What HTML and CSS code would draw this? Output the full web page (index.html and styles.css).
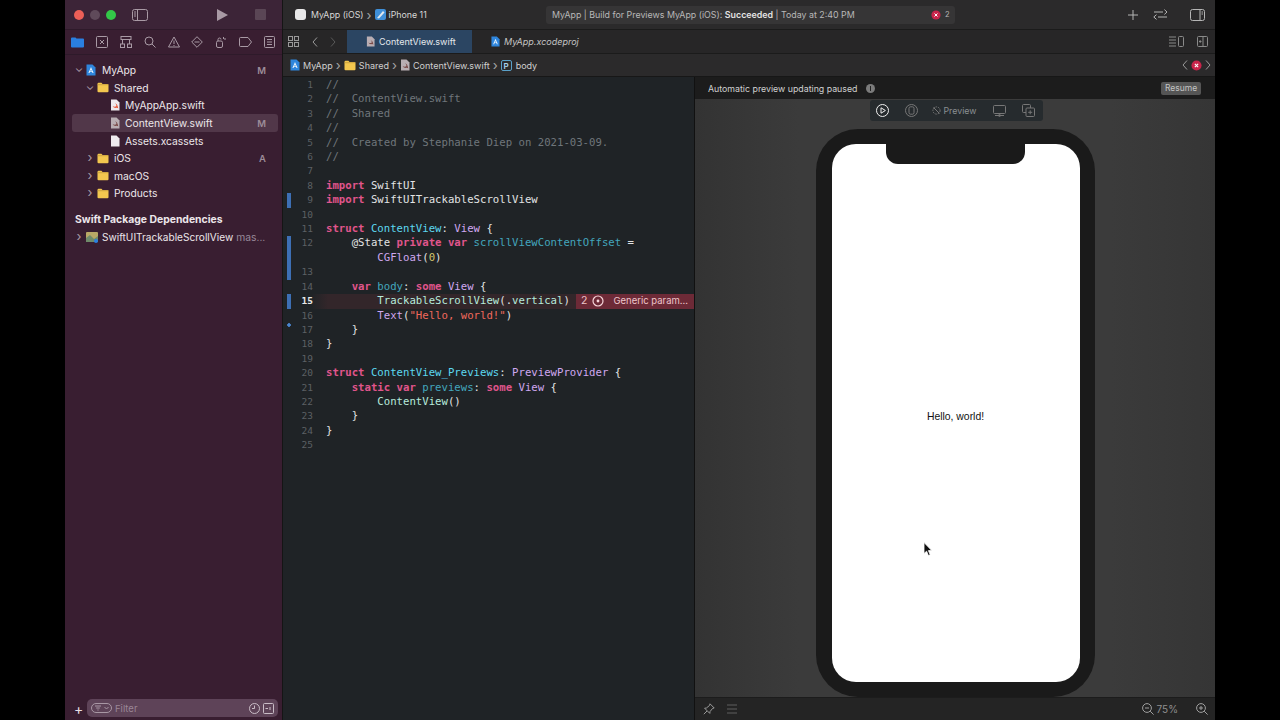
FILE: index.html

```html
<!DOCTYPE html>
<html lang="en">
<head>
  <meta charset="UTF-8">
  <title>MyApp - ContentView.swift</title>
  <link rel="stylesheet" href="styles.css">
</head>
<body>
  <!-- shared icons -->
  <svg class="defs" width="0" height="0">
    <symbol id="i-folder" viewBox="0 0 12 11">
      <path d="M0.5 2 Q0.5 0.8 1.6 0.8 H4.4 L5.6 2 H10.4 Q11.5 2 11.5 3 V9.2 Q11.5 10.2 10.4 10.2 H1.6 Q0.5 10.2 0.5 9.2 Z" fill="#f3c74f"/>
      <path d="M0.5 2.7 H11.5" stroke="#b8923a" stroke-width=".7"/>
    </symbol>
    <symbol id="i-swift" viewBox="0 0 10 12">
      <path d="M1 .5 H6.5 L9.5 3.5 V11.5 H1 Z" fill="#efeaee"/>
      <path d="M2.6 7 Q5 8.5 6.4 7 Q6.6 5.5 5 4 Q7.6 5.4 7.8 7.6 L8.2 9.2 Q6.8 8.4 5.6 9 Q3.6 9 2.6 7 Z" fill="#e8593a"/>
    </symbol>
    <symbol id="i-swift-dim" viewBox="0 0 10 12">
      <path d="M1 .5 H6.5 L9.5 3.5 V11.5 H1 Z" fill="#b9aeb3"/>
      <path d="M2.6 7 Q5 8.5 6.4 7 Q6.6 5.5 5 4 Q7.6 5.4 7.8 7.6 L8.2 9.2 Q6.8 8.4 5.6 9 Q3.6 9 2.6 7 Z" fill="#7a4a48"/>
    </symbol>
    <symbol id="i-proj" viewBox="0 0 10 12">
      <path d="M.5 .5 H6.5 L9.5 3.5 V11.5 H.5 Z" fill="#2f86dd"/>
      <path d="M5 3 L7.6 9 H6.5 L5 5.4 L3.5 9 H2.4 Z M3 7 H7 V7.8 H3 Z" fill="#e8f2fb"/>
    </symbol>
    <symbol id="i-err" viewBox="0 0 12 12">
      <circle cx="6" cy="6" r="5.5" fill="#c9244a"/>
      <path d="M4.2 4.2 L7.8 7.8 M7.8 4.2 L4.2 7.8" stroke="#fff" stroke-width="1.2"/>
    </symbol>
  </svg>

  <div class="app">
    <!-- Navigator -->
    <aside class="sidebar">
      <div class="side-toolbar">
        <div class="lights"><i class="light red"></i><i class="light grey"></i><i class="light green"></i></div>
        <svg class="ico side-toggle" width="16" height="12" viewBox="0 0 16 12" fill="none" stroke="#a99aa5"><rect x=".5" y=".5" width="15" height="11" rx="2"/><path d="M5.5 .5 V11.5 M2 3 H4 M2 5 H4 M2 7 H4"/></svg>
        <svg class="ico play" width="13" height="14" viewBox="0 0 13 14"><path d="M1 1 L12 7 L1 13 Z" fill="#a99aa5"/></svg>
        <svg class="ico stop" width="11" height="11" viewBox="0 0 11 11"><rect width="11" height="11" rx="1" fill="#5a4655"/></svg>
      </div>
      <div class="nav-tabs">
        <svg width="13" height="11" viewBox="0 0 13 11"><path d="M0 1.5 Q0 .5 1 .5 H4.5 L5.5 1.5 H12 Q13 1.5 13 2.5 V9.5 Q13 10.5 12 10.5 H1 Q0 10.5 0 9.5 Z" fill="#2a7fe0"/></svg>
        <svg width="12" height="12" viewBox="0 0 12 12" fill="none" stroke="#a99aa5"><rect x=".5" y=".5" width="11" height="11" rx="1"/><path d="M4 4 L8 8 M8 4 L4 8"/></svg>
        <svg width="12" height="12" viewBox="0 0 12 12" fill="none" stroke="#a99aa5"><rect x="1" y=".5" width="10" height="3"/><path d="M2.5 3.5 V8 M9.5 3.5 V8"/><rect x=".5" y="8" width="4" height="3.5"/><rect x="7.5" y="8" width="4" height="3.5"/></svg>
        <svg width="12" height="12" viewBox="0 0 12 12" fill="none" stroke="#a99aa5"><circle cx="5" cy="5" r="4"/><path d="M8 8 L11.5 11.5"/></svg>
        <svg width="12" height="12" viewBox="0 0 12 12" fill="none" stroke="#a99aa5"><path d="M6 1 L11.5 11 H.5 Z"/><path d="M6 4.5 V8 M6 9 V10"/></svg>
        <svg width="12" height="12" viewBox="0 0 12 12" fill="none" stroke="#a99aa5"><path d="M6 .7 L11.3 6 L6 11.3 L.7 6 Z"/><path d="M3.5 6 H8.5"/></svg>
        <svg width="12" height="12" viewBox="0 0 12 12" fill="none" stroke="#a99aa5"><rect x="1.5" y="5" width="6" height="6.5" rx="1.5"/><path d="M3 5 V3.5 A1.5 1.5 0 0 1 6 3.5 M8.5 1 V3 M10 2 V4"/></svg>
        <svg width="13" height="10" viewBox="0 0 13 10" fill="none" stroke="#a99aa5"><path d="M1.5 .5 H9 L12.5 5 L9 9.5 H1.5 Q.5 9.5 .5 8.5 V1.5 Q.5 .5 1.5 .5 Z"/></svg>
        <svg width="11" height="12" viewBox="0 0 11 12" fill="none" stroke="#a99aa5"><rect x=".5" y=".5" width="10" height="11" rx="1"/><path d="M3 3.5 H8 M3 6 H8 M3 8.5 H8"/></svg>
      </div>

      <div class="tree">
        <div class="row lvl0"><span class="arrow">&#x2304;</span><svg class="file" width="10" height="12"><use href="#i-proj"/></svg><span class="name">MyApp</span><span class="flag">M</span></div>
        <div class="row lvl1"><span class="arrow">&#x2304;</span><svg class="file" width="12" height="11"><use href="#i-folder"/></svg><span class="name">Shared</span></div>
        <div class="row lvl2"><svg class="file" width="10" height="12"><use href="#i-swift"/></svg><span class="name">MyAppApp.swift</span></div>
        <div class="row lvl2 selected"><svg class="file" width="10" height="12"><use href="#i-swift-dim"/></svg><span class="name">ContentView.swift</span><span class="flag">M</span></div>
        <div class="row lvl2"><svg class="file" width="10" height="12" viewBox="0 0 10 12"><path d="M1 .5 H6.5 L9.5 3.5 V11.5 H1 Z" fill="#efeaee"/></svg><span class="name">Assets.xcassets</span></div>
        <div class="row lvl1"><span class="arrow closed">&#x203A;</span><svg class="file" width="12" height="11"><use href="#i-folder"/></svg><span class="name">iOS</span><span class="flag">A</span></div>
        <div class="row lvl1"><span class="arrow closed">&#x203A;</span><svg class="file" width="12" height="11"><use href="#i-folder"/></svg><span class="name">macOS</span></div>
        <div class="row lvl1"><span class="arrow closed">&#x203A;</span><svg class="file" width="12" height="11"><use href="#i-folder"/></svg><span class="name">Products</span></div>
        <div class="group-title">Swift Package Dependencies</div>
        <div class="row lvl0"><span class="arrow closed">&#x203A;</span><svg class="file" width="12" height="12" viewBox="0 0 12 12"><rect y="1" width="12" height="10" rx="1" fill="#b9a866"/><path d="M0 7 L4 4 L8 8 L12 5 V11 H0 Z" fill="#6f8a6a"/><circle cx="10" cy="10" r="2" fill="#2a7fe0"/></svg><span class="name pkg">SwiftUITrackableScrollView</span><span class="pkg-branch">mas...</span></div>
      </div>

      <div class="filter-bar">
        <span class="add">+</span>
        <div class="filter">
          <svg width="21" height="10" viewBox="0 0 21 10" fill="none" stroke="#a897a4"><rect x=".5" y=".5" width="20" height="9" rx="4.5"/><path d="M4 3 H10 M5.2 5 H8.8 M6.4 7 H7.6 M13.5 4 L15.5 6 L17.5 4"/></svg>
          <span class="filter-text">Filter</span>
          <svg class="filter-clock" width="11" height="11" viewBox="0 0 11 11" fill="none" stroke="#c9bcc6"><circle cx="5.5" cy="5.5" r="5"/><path d="M5.5 2.5 V5.5 H3"/></svg>
          <svg width="11" height="11" viewBox="0 0 11 11" fill="none" stroke="#c9bcc6"><rect x=".5" y=".5" width="10" height="10" rx="1"/><path d="M2.5 5.5 H5 M7 4 V7"/></svg>
        </div>
      </div>
    </aside>

    <main class="main">
      <header class="toolbar">
        <div class="scheme">
          <span class="scheme-icon"></span><span>MyApp (iOS)</span><span class="sep">&#x203A;</span>
          <svg width="11" height="11" viewBox="0 0 11 11"><rect width="11" height="11" rx="2" fill="#3f8fd8"/><path d="M2 9 L8 2 L9.5 3.5 L4 9.5 Z" fill="#dfe8ef"/></svg>
          <span>iPhone 11</span>
        </div>
        <div class="status">
          <div class="status-text"><span>MyApp | Build for Previews MyApp (iOS):</span> <b>Succeeded</b> <span>| Today at 2:40 PM</span></div>
          <svg width="10" height="10"><use href="#i-err"/></svg><span class="status-count">2</span>
        </div>
        <div class="toolbar-right">
          <svg width="10" height="10" viewBox="0 0 10 10" stroke="#b5b5b5"><path d="M5 0 V10 M0 5 H10"/></svg>
          <svg width="15" height="11" viewBox="0 0 15 11" fill="none" stroke="#b5b5b5"><path d="M5 8 H14 M0.8 8 L3.5 5.6 M0.8 8 L3.5 10.4 M1 3 H10 M14 3 L11.4 .6 M14 3 L11.4 5.4"/></svg>
          <svg width="15" height="12" viewBox="0 0 15 12" fill="none" stroke="#b5b5b5"><rect x=".5" y=".5" width="14" height="11" rx="2"/><path d="M10 .5 V11.5 M11.5 3 H13 M11.5 5 H13"/></svg>
        </div>
      </header>

      <div class="tabbar">
        <svg class="grid-ico" width="11" height="11" viewBox="0 0 11 11" fill="none" stroke="#9a9a9a"><rect x=".5" y=".5" width="4" height="4"/><rect x="6.5" y=".5" width="4" height="4"/><rect x=".5" y="6.5" width="4" height="4"/><rect x="6.5" y="6.5" width="4" height="4"/></svg>
        <svg class="nav-back" width="6" height="10" viewBox="0 0 6 10" fill="none" stroke="#9a9a9a"><path d="M5 .5 L1 5 L5 9.5"/></svg>
        <svg class="nav-fwd" width="6" height="10" viewBox="0 0 6 10" fill="none" stroke="#5a5a5a"><path d="M1 .5 L5 5 L1 9.5"/></svg>
        <div class="tab active"><svg width="9" height="11"><use href="#i-swift-dim"/></svg><span>ContentView.swift</span></div>
        <div class="tab preview"><svg width="9" height="11"><use href="#i-proj"/></svg><span>MyApp.xcodeproj</span></div>
        <div class="tab-tools">
          <svg width="15" height="11" viewBox="0 0 15 11" fill="none" stroke="#8a8a8a"><path d="M0 1 H7 M0 4 H7 M0 7 H7 M0 10 H7"/><rect x="9.5" y=".5" width="5" height="10" rx="1"/></svg>
          <svg width="11" height="11" viewBox="0 0 11 11" fill="none" stroke="#8a8a8a"><rect x=".5" y=".5" width="10" height="10" rx="1"/><path d="M6 .5 V10.5 M2 5.5 H4.5 M3.2 4.2 V6.8"/></svg>
        </div>
      </div>

      <nav class="jumpbar">
        <svg width="10" height="12"><use href="#i-proj"/></svg><span>MyApp</span><span class="sep">&#x203A;</span>
        <svg width="12" height="11"><use href="#i-folder"/></svg><span>Shared</span><span class="sep">&#x203A;</span>
        <svg width="10" height="12"><use href="#i-swift-dim"/></svg><span>ContentView.swift</span><span class="sep">&#x203A;</span>
        <span class="prop-badge">P</span><span>body</span>
        <div class="jump-right">
          <svg width="6" height="10" viewBox="0 0 6 10" fill="none" stroke="#9a9a9a"><path d="M5 .5 L1 5 L5 9.5"/></svg>
          <svg width="11" height="11"><use href="#i-err"/></svg>
          <svg width="6" height="10" viewBox="0 0 6 10" fill="none" stroke="#9a9a9a"><path d="M1 .5 L5 5 L1 9.5"/></svg>
        </div>
      </nav>

      <div class="panes">
        <!-- Source editor -->
        <section class="editor">
          <div class="line"><i></i><b>1</b><code class="c">//</code></div>
          <div class="line"><i></i><b>2</b><code class="c">//  ContentView.swift</code></div>
          <div class="line"><i></i><b>3</b><code class="c">//  Shared</code></div>
          <div class="line"><i></i><b>4</b><code class="c">//</code></div>
          <div class="line"><i></i><b>5</b><code class="c">//  Created by Stephanie Diep on 2021-03-09.</code></div>
          <div class="line"><i></i><b>6</b><code class="c">//</code></div>
          <div class="line"><i></i><b>7</b><code></code></div>
          <div class="line"><i></i><b>8</b><code><span class="k">import</span> SwiftUI</code></div>
          <div class="line"><i class="chg"></i><b>9</b><code><span class="k">import</span> SwiftUITrackableScrollView</code></div>
          <div class="line"><i></i><b>10</b><code></code></div>
          <div class="line"><i></i><b>11</b><code><span class="k">struct</span> <span class="d">ContentView</span>: <span class="t">View</span> {</code></div>
          <div class="line"><i class="chg"></i><b>12</b><div class="wrapped"><code>    @State <span class="k">private</span> <span class="k">var</span> <span class="p">scrollViewContentOffset</span> =</code><code>        <span class="t">CGFloat</span>(<span class="n">0</span>)</code></div></div>
          <div class="line"><i class="chg"></i><b>13</b><code></code></div>
          <div class="line"><i></i><b>14</b><code>    <span class="k">var</span> <span class="p">body</span>: <span class="k">some</span> <span class="t">View</span> {</code></div>
          <div class="line err-line"><i class="chg"></i><b>15</b><code>        <span class="m">TrackableScrollView</span>(.<span class="m">vertical</span>)</code>
            <div class="err-badge"><span>2</span><svg width="12" height="12" viewBox="0 0 12 12" fill="none" stroke="#f7d5da" stroke-width="1.2"><circle cx="6" cy="6" r="5"/><circle cx="6" cy="6" r="1.4" fill="#f7d5da" stroke="none"/></svg><span class="err-msg">Generic param...</span></div>
          </div>
          <div class="line"><i></i><b>16</b><code>        <span class="t">Text</span>(<span class="s">"Hello, world!"</span>)</code></div>
          <div class="line"><i class="dot"></i><b>17</b><code>    }</code></div>
          <div class="line"><i></i><b>18</b><code>}</code></div>
          <div class="line"><i></i><b>19</b><code></code></div>
          <div class="line"><i></i><b>20</b><code><span class="k">struct</span> <span class="d">ContentView_Previews</span>: <span class="t">PreviewProvider</span> {</code></div>
          <div class="line"><i></i><b>21</b><code>    <span class="k">static</span> <span class="k">var</span> <span class="p">previews</span>: <span class="k">some</span> <span class="t">View</span> {</code></div>
          <div class="line"><i></i><b>22</b><code>        <span class="m">ContentView</span>()</code></div>
          <div class="line"><i></i><b>23</b><code>    }</code></div>
          <div class="line"><i></i><b>24</b><code>}</code></div>
          <div class="line"><i></i><b>25</b><code></code></div>
        </section>

        <!-- Canvas -->
        <section class="preview-pane">
          <div class="pause-bar">
            <span>Automatic preview updating paused</span>
            <svg width="9" height="9" viewBox="0 0 9 9"><circle cx="4.5" cy="4.5" r="4.5" fill="#7b7b7b"/><rect x="4" y="2" width="1" height="5" fill="#222"/></svg>
            <span class="resume">Resume</span>
          </div>
          <div class="canvas">
            <div class="canvas-tools">
              <svg width="13" height="13" viewBox="0 0 13 13" fill="none" stroke="#f0f0f0"><circle cx="6.5" cy="6.5" r="6"/><path d="M5 3.8 L9.4 6.5 L5 9.2 Z"/></svg>
              <svg class="tool-live" width="13" height="13" viewBox="0 0 13 13" fill="none" stroke="#777"><circle cx="6.5" cy="6.5" r="6"/><rect x="4" y="2.8" width="5" height="7.4" rx="1.5"/></svg>
              <span class="canvas-label"><svg width="9" height="9" viewBox="0 0 9 9" fill="none" stroke="#777"><circle cx="4.5" cy="4.5" r="3.6" stroke-dasharray="1.6 1"/><path d="M1.5 1.5 L7.5 7.5"/></svg>Preview</span>
              <svg class="tool-device" width="13" height="12" viewBox="0 0 13 12" fill="none" stroke="#777"><rect x=".5" y=".5" width="12" height="8" rx="1"/><path d="M2 10.5 H11"/><circle cx="6.5" cy="10.5" r="1"/></svg>
              <svg class="tool-dup" width="13" height="13" viewBox="0 0 13 13" fill="none" stroke="#777"><rect x=".5" y=".5" width="8" height="8" rx="1"/><rect x="4" y="4" width="8.5" height="8.5" rx="1" fill="#262b2e"/><path d="M8.2 6.3 V10.3 M6.2 8.3 H10.2"/></svg>
            </div>
            <div class="phone">
              <div class="screen">
                <div class="notch"></div>
                <p class="hello">Hello, world!</p>
              </div>
            </div>
            <svg class="cursor" width="10" height="15" viewBox="0 0 10 15"><path d="M1 .5 V11.5 L3.6 9.2 L5.4 13.6 L7.2 12.8 L5.4 8.6 H8.8 Z" fill="#111" stroke="#fff" stroke-width=".8"/></svg>
          </div>
          <div class="canvas-footer">
            <svg width="12" height="12" viewBox="0 0 12 12" fill="none" stroke="#9a9a9a"><path d="M7 .8 L11.2 5 L9.6 5.4 L7 8.6 L6.8 10.4 L1.6 5.2 L3.4 5 L6.6 2.4 Z M4 8 L.8 11.2"/></svg>
            <svg width="10" height="10" viewBox="0 0 10 10" stroke="#5e5e5e"><path d="M0 1 H10 M0 5 H10 M0 9 H10"/></svg>
            <div class="zoom">
              <svg width="12" height="12" viewBox="0 0 12 12" fill="none" stroke="#a0a0a0"><circle cx="5" cy="5" r="4.4"/><path d="M8.2 8.2 L11.6 11.6 M3 5 H7"/></svg>
              <span class="zoom-val">75%</span>
              <svg class="zoom-in" width="12" height="12" viewBox="0 0 12 12" fill="none" stroke="#a0a0a0"><circle cx="5" cy="5" r="4.4"/><path d="M8.2 8.2 L11.6 11.6 M3 5 H7 M5 3 V7"/></svg>
            </div>
          </div>
        </section>
      </div>
    </main>
  </div>
</body>
</html>
```

FILE: styles.css

```css
* {
  box-sizing: border-box;
}
html, body {
  margin: 0;
  height: 100%;
  background: #000;
  overflow: hidden;
}
body {
  font-family: Inter, "Noto Sans", sans-serif;
  font-size: 10px;
  color: #d8d8d8;
}
.defs {
  position: absolute;
}
.app {
  display: flex;
  width: 1150px;
  height: 720px;
  margin-left: 65px;
}

/* Navigator */
.sidebar {
  width: 218px;
  display: flex;
  flex-direction: column;
  background: #391e31;
  border-right: 1px solid #151515;
}
.side-toolbar {
  height: 30px;
  display: flex;
  align-items: center;
  padding-left: 9px;
  background: #3c2437;
  border-bottom: 1px solid #2e1a2a;
}
.lights {
  display: flex;
  gap: 6px;
}
.light {
  width: 10px;
  height: 10px;
  border-radius: 50%;
}
.light.red { background: #ec5f57; }
.light.grey { background: #5f4a5a; }
.light.green { background: #33c748; }
.side-toggle { margin-left: 16px; }
.play { margin-left: 68px; }
.stop { margin-left: 26px; }
.nav-tabs {
  height: 25px;
  display: flex;
  align-items: center;
  justify-content: space-between;
  padding: 0 7px 0 6px;
  border-bottom: 1px solid #2e1a2a;
}
.tree {
  flex: 1;
  padding-top: 6.5px;
}
.row {
  height: 17.6px;
  display: flex;
  align-items: center;
  font-size: 10.3px;
  color: #ece6ea;
  position: relative;
}
.row .file { flex: none; }
.row .name { margin-left: 5px; white-space: nowrap; }
.lvl0 > svg + .name { margin-left: 6px; }
.lvl0 > svg + .pkg { margin-left: 4px; font-size: 10.1px; }
.pkg-branch {
  margin-left: 3px;
  color: #98899a;
  white-space: nowrap;
}
.row .flag {
  margin-left: auto;
  margin-right: 16px;
  font-weight: 600;
  font-size: 9.5px;
  color: #9c8c98;
}
.arrow {
  width: 10px;
  margin-right: 2px;
  text-align: center;
  color: #a99aa5;
  line-height: 6px;
  height: 10px;
  font-size: 11px;
}
.arrow.closed {
  font-size: 13px;
  line-height: 9px;
}
.lvl0 { padding-left: 9px; }
.lvl1 { padding-left: 20px; }
.lvl2 { padding-left: 45px; }
.selected {
  margin: 0 4px 0 7px;
  padding-left: 38px;
  background: #513749;
  border-radius: 3px;
}
.selected .flag { margin-right: 12px; }
.group-title {
  margin: 10px 0 0 10px;
  height: 16px;
  line-height: 16px;
  font-size: 10.4px;
  font-weight: 700;
  color: #ece6ea;
}
.filter-bar {
  height: 27px;
  display: flex;
  align-items: center;
  padding: 3px 4px 0 9px;
}
.add {
  width: 13px;
  font-size: 14px;
  color: #e8e0e6;
}
.filter {
  flex: 1;
  height: 18px;
  display: flex;
  align-items: center;
  gap: 3px;
  padding: 0 4px;
  background: #5e4358;
  border-radius: 5px;
  color: #9b8696;
}
.filter-text { flex: 1; font-size: 9.5px; }

/* Main area */
.main {
  flex: 1;
  display: flex;
  flex-direction: column;
  min-width: 0;
}
.toolbar {
  height: 30px;
  display: flex;
  align-items: center;
  background: #2b2a2b;
  border-bottom: 1px solid #1b1b1b;
  padding-left: 12px;
}
.scheme {
  width: 251px;
  display: flex;
  align-items: center;
  gap: 3px;
  font-size: 8.8px;
}
.scheme > span:first-child + span { margin-left: 2px; }
.scheme-icon {
  width: 11px;
  height: 11px;
  border-radius: 3px;
  background: #e8e8e8;
}
.sep {
  font-size: 13px;
  line-height: 10px;
  color: #a5a5a5;
}
.status {
  width: 409px;
  height: 18px;
  display: flex;
  align-items: center;
  padding-left: 6px;
  background: #363536;
  border-radius: 3px;
  font-size: 8.85px;
  color: #b8b8b8;
}
.status b { color: #e2e2e2; font-weight: 600; }
.status-text { width: 379px; white-space: nowrap; }
.status-count { margin-left: 4px; font-size: 7.5px; }
.toolbar-right {
  flex: 1;
  display: flex;
  align-items: center;
  justify-content: flex-end;
  gap: 15px;
  padding-right: 10px;
}
.toolbar-right svg:last-child { margin-left: 7px; }
.tabbar {
  height: 24px;
  display: flex;
  align-items: center;
  background: #272627;
  border-bottom: 1px solid #1b1b1b;
}
.grid-ico { margin-left: 5px; }
.nav-back { margin-left: 13px; }
.nav-fwd { margin-left: 12px; margin-right: 11px; }
.tab {
  height: 23px;
  display: flex;
  align-items: center;
  font-size: 9px;
  gap: 4px;
}
.tab.active {
  width: 125px;
  padding-left: 19px;
  background: #2b4562;
  color: #e4e8ec;
}
.tab.preview {
  margin-left: 19px;
  font-style: italic;
  color: #c5c5c5;
}
.tab-tools {
  margin-left: auto;
  display: flex;
  align-items: center;
  gap: 13px;
  padding-right: 7px;
}
.jumpbar {
  height: 23px;
  display: flex;
  align-items: center;
  gap: 3px;
  padding-left: 7px;
  background: #2b2a2b;
  border-bottom: 1px solid #171717;
  font-size: 9px;
  color: #cfcfcf;
}
.prop-badge {
  width: 11px;
  height: 11px;
  line-height: 10px;
  text-align: center;
  border: 1px solid #5aa0c8;
  border-radius: 2px;
  color: #a8d4ee;
  font-size: 8px;
  font-weight: 600;
  margin-right: 1px;
}
.jump-right {
  margin-left: auto;
  display: flex;
  align-items: center;
  gap: 3px;
  padding-right: 4px;
}
.panes {
  flex: 1;
  display: flex;
  min-height: 0;
}

/* Source editor */
.editor {
  width: 412px;
  padding-top: 1px;
  background: #1f2326;
  border-right: 1px solid #111;
  font-family: "DejaVu Sans Mono", monospace;
  font-size: 10.66px;
}
.line {
  display: flex;
  line-height: 14.4px;
  padding-left: 4px;
}
.line i {
  width: 4px;
  flex: none;
}
.line i.chg {
  background: #3d6fb4;
}
.line i.dot {
  background: radial-gradient(circle at 2px 2px, #4a86d0 1.5px, transparent 2px);
}
.line b {
  width: 22px;
  flex: none;
  text-align: right;
  font-weight: 400;
  font-size: 9.5px;
  color: #5c6064;
}
.line code {
  margin-left: 13px;
  font: inherit;
  white-space: pre;
  color: #e2e3e4;
}
.wrapped {
  display: flex;
  flex-direction: column;
}
.c { color: #6f767b !important; }
.k { color: #e0558c; font-weight: 700; }
.d { color: #5dd8f0; }
.t { color: #cfa8f0; }
.p { color: #43a6bd; }
.m { color: #b6eadc; }
.s { color: #f0695c; }
.n { color: #d3c36c; }
.err-line {
  background: linear-gradient(90deg, transparent 28px, #33262a 45px, #33262a 292px);
}
.err-line b {
  color: #e8e8e8;
  font-weight: 700;
}
.err-badge {
  margin-left: auto;
  width: 118px;
  display: flex;
  align-items: center;
  gap: 5px;
  padding-left: 5px;
  background: #6d2a37;
  color: #eec5cb;
  font-family: Inter, sans-serif;
  font-size: 9.5px;
}
.err-badge span:first-child { font-size: 10.5px; }
.err-msg { margin-left: 4px; white-space: nowrap; }

/* Canvas */
.preview-pane {
  flex: 1;
  display: flex;
  flex-direction: column;
  min-width: 0;
}
.pause-bar {
  height: 22px;
  display: flex;
  align-items: center;
  gap: 9px;
  padding: 0 14px 0 13px;
  background: #1c1c1c;
  font-size: 8.8px;
  color: #d0d0d0;
}
.resume {
  margin-left: auto;
  width: 40px;
  height: 13px;
  line-height: 13px;
  text-align: center;
  background: #555;
  border-radius: 2px;
  font-size: 8.5px;
  color: #c4c4c4;
}
.canvas {
  flex: 1;
  position: relative;
  display: flex;
  flex-direction: column;
  align-items: center;
  background: linear-gradient(90deg, #333 0, #3b3b3b 20%, #3b3b3b 80%, #353535 100%);
}
.canvas-tools {
  width: 173px;
  height: 21px;
  margin-top: 1px;
  display: flex;
  align-items: center;
  padding: 0 6px;
  background: #262b2e;
  border-radius: 3px;
  position: relative;
  left: 1px;
}
.tool-live { margin-left: 16px; }
.tool-device { margin-left: 17px; }
.tool-dup { margin-left: 16px; }
.canvas-label {
  display: flex;
  align-items: center;
  gap: 3px;
  font-size: 8.8px;
  color: #8a8f92;
  margin-left: 14px;
}
.phone {
  width: 279px;
  height: 568px;
  margin-top: 8px;
  padding: 15px 15px 15px 16px;
  background: #1a1a1a;
  border-radius: 42px;
}
.screen {
  height: 100%;
  display: flex;
  flex-direction: column;
  align-items: center;
  background: #fff;
  border-radius: 24px;
}
.notch {
  width: 139px;
  height: 20px;
  background: #1a1a1a;
  border-radius: 0 0 12px 12px;
}
.hello {
  margin: 247px 0 0;
  font-family: "Liberation Sans", sans-serif;
  font-size: 10.4px;
  color: #111;
}
.cursor {
  position: absolute;
  left: 228px;
  top: 443px;
}
.canvas-footer {
  height: 23px;
  display: flex;
  align-items: center;
  gap: 12px;
  padding: 0 7px 0 8px;
  background: #242424;
  border-top: 1px solid #1c1c1c;
}
.zoom {
  margin-left: auto;
  display: flex;
  align-items: center;
  gap: 3px;
  color: #8f8f8f;
  font-size: 10px;
}
.zoom-in { margin-left: 15px; }
```
